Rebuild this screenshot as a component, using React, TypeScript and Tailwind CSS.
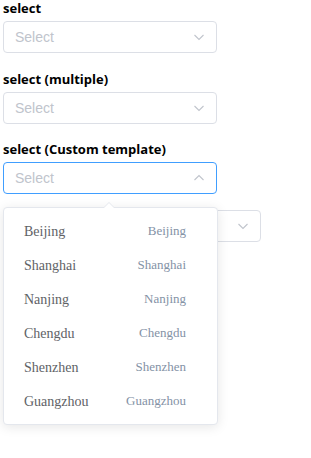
import React from "react";

function Chevron({ up = false }: { up?: boolean }) {
  return (
    <svg width="14" height="14" viewBox="0 0 14 14" className="shrink-0">
      <path
        d={up ? "M2.5 9 L7 4.5 L11.5 9" : "M2.5 5 L7 9.5 L11.5 5"}
        fill="none"
        stroke="#c0c4cc"
        strokeWidth="1.1"
      />
    </svg>
  );
}

function SelectBox({
  focused = false,
  width = "w-[214px]",
  placeholder = true,
}: {
  focused?: boolean;
  width?: string;
  placeholder?: boolean;
}) {
  return (
    <div
      className={`${width} h-[32px] rounded-[4px] border ${
        focused ? "border-[#409eff]" : "border-[#dcdfe6]"
      } bg-white flex items-center justify-between pl-[11px] pr-[10px]`}
    >
      <span className="text-[14px] text-[#c0c4cc]" style={{ fontFamily: "'Liberation Sans', Arial, sans-serif" }}>
        {placeholder ? "Select" : ""}
      </span>
      <Chevron up={focused} />
    </div>
  );
}

const cities = ["Beijing", "Shanghai", "Nanjing", "Chengdu", "Shenzhen", "Guangzhou"];

const labelCls = "text-[13px] font-bold leading-[16px] mb-[5px] text-black";
const labelFont = { fontFamily: "'Open Sans', sans-serif" };

export default function App() {
  return (
    <div className="w-[311px] h-[458px] bg-white relative px-[3px]">
      <div className={labelCls} style={labelFont}>
        select
      </div>
      <SelectBox />
      <div className={`mt-[18px] ${labelCls}`} style={labelFont}>
        select (multiple)
      </div>
      <SelectBox />
      <div className={`mt-[17px] ${labelCls}`} style={labelFont}>
        select (Custom template)
      </div>
      <div className="relative">
        <SelectBox focused />
        <div className="mt-[16px]">
          <SelectBox width="w-[258px]" placeholder={false} />
        </div>
        <div className="absolute left-0 top-[45px] w-[215px] rounded-[4px] border border-[#e4e7ed] bg-white shadow-[0_2px_12px_0_rgba(0,0,0,0.1)] py-[6px]">
          <div className="absolute -top-[6px] left-[99px] w-0 h-0 border-l-[6px] border-r-[6px] border-b-[6px] border-l-transparent border-r-transparent border-b-[#e4e7ed]" />
          <div className="absolute -top-[5px] left-[100px] w-0 h-0 border-l-[5px] border-r-[5px] border-b-[5px] border-l-transparent border-r-transparent border-b-white" />
          {cities.map((c) => (
            <div
              key={c}
              className="h-[34px] flex items-center justify-between pl-[20px] pr-[31px]"
              style={{ fontFamily: "'Liberation Serif', 'Times New Roman', serif" }}
            >
              <span className="text-[14px] text-[#606266]">{c}</span>
              <span className="text-[13px] text-[#8492a6]">{c}</span>
            </div>
          ))}
        </div>
      </div>
    </div>
  );
}
